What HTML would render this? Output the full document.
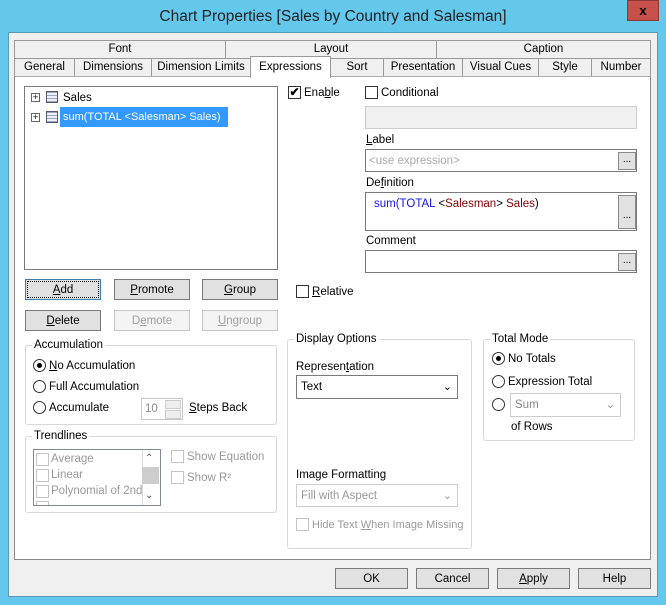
<!DOCTYPE html>
<html><head><style>
*{box-sizing:border-box;margin:0;padding:0}
body{width:666px;height:605px;position:relative;background:#63c8ec;font-family:"Liberation Sans",sans-serif;font-size:11.5px;line-height:16px;color:#000;overflow:hidden;white-space:nowrap}
.a{position:absolute}
.win{left:8px;top:32px;width:650px;height:565px;background:#f0f0f0;border:1px solid #5a9ab4}
.tab{position:absolute;height:18px;border:1px solid #9a9a9a;border-bottom:none;background:#f0f0f0;text-align:center;line-height:17px}
.panel{left:14px;top:76px;width:637px;height:484px;background:#fff;border:1px solid #8a8a8a;border-top-color:#adadad}
.btn{position:absolute;height:21px;border:1px solid #7a7a7a;background:#e1e1e1;text-align:center;line-height:20px}
.dis{color:#a0a0a0;border-color:#c8c8c8;background:#f4f4f4}
.cb{position:absolute;width:13px;height:13px;border:1px solid #333;background:#fff}
.cbd{border-color:#c4c4c4}
.rd{position:absolute;width:13px;height:13px;border:1px solid #333;border-radius:50%;background:#fff}
.grp{position:absolute;border:1px solid #d8d8d8;border-radius:3px}
.gl{position:absolute;top:-9px;left:6px;background:#fff;padding:0 2px}
.box{position:absolute;border:1px solid #7a7a7a;background:#fff}
.dots{position:absolute;width:18px;border:1px solid #8a8a8a;background:#e1e1e1;text-align:center;font-size:10px}
u{text-decoration:underline}
</style></head><body>
<div class="a" style="left:0;top:0;width:666px;height:32px;text-align:center;font-size:15.5px;line-height:33px;color:#222">Chart Properties [Sales by Country and Salesman]</div>
<div class="a" style="left:627px;top:0;width:32px;height:21px;background:#c7504a;border:1px solid #8b3a36;color:#000;text-align:center;font-weight:bold;font-size:13px;line-height:19px">x</div>
<div class="a win"></div>
<div class="tab" style="left:14px;top:40px;width:212px">Font</div>
<div class="tab" style="left:225px;top:40px;width:212px">Layout</div>
<div class="tab" style="left:436px;top:40px;width:215px">Caption</div>
<div class="tab" style="left:14px;top:58px;width:61px">General</div>
<div class="tab" style="left:74px;top:58px;width:78px">Dimensions</div>
<div class="tab" style="left:151px;top:58px;width:100px">Dimension Limits</div>
<div class="tab" style="left:330px;top:58px;width:54px">Sort</div>
<div class="tab" style="left:383px;top:58px;width:80px">Presentation</div>
<div class="tab" style="left:462px;top:58px;width:77px">Visual Cues</div>
<div class="tab" style="left:538px;top:58px;width:54px">Style</div>
<div class="tab" style="left:591px;top:58px;width:60px">Number</div>
<div class="a panel"></div>
<div class="tab" style="left:250px;top:56px;width:81px;height:22px;background:#fff;z-index:2;line-height:20px">Expressions</div>
<div class="box" style="left:24px;top:86px;width:254px;height:184px"></div>
<div class="a" style="left:31px;top:93px;width:9px;height:9px;border:1px solid #666;font-size:9px;line-height:7px;text-align:center">+</div>
<div class="a" style="left:46px;top:91px;width:12px;height:12px;border:1px solid #557;background:repeating-linear-gradient(#9ab 0 1px,#eef 1px 3px)"></div>
<div class="a" style="left:63px;top:90px">Sales</div>
<div class="a" style="left:31px;top:113px;width:9px;height:9px;border:1px solid #666;font-size:9px;line-height:7px;text-align:center">+</div>
<div class="a" style="left:46px;top:111px;width:12px;height:12px;border:1px solid #557;background:repeating-linear-gradient(#9ab 0 1px,#eef 1px 3px)"></div>
<div class="a" style="left:60px;top:107px;width:168px;height:20px;background:#3399ff;color:#fff;padding:2px 3px;font-size:11px">sum(TOTAL &lt;Salesman&gt; Sales)</div>
<div class="btn" style="left:25px;top:279px;width:76px;outline:1px dotted #000;outline-offset:-3px;border-color:#3c7fb1"><u>A</u>dd</div>
<div class="btn" style="left:114px;top:279px;width:76px"><u>P</u>romote</div>
<div class="btn" style="left:202px;top:279px;width:76px"><u>G</u>roup</div>
<div class="btn" style="left:25px;top:310px;width:76px"><u>D</u>elete</div>
<div class="btn dis" style="left:114px;top:310px;width:76px">D<u>e</u>mote</div>
<div class="btn dis" style="left:202px;top:310px;width:76px"><u>U</u>ngroup</div>
<div class="grp" style="left:25px;top:345px;width:252px;height:80px"><span class="gl">Accumulation</span></div>
<div class="rd" style="left:33px;top:359px"><div class="a" style="left:3px;top:3px;width:5px;height:5px;border-radius:50%;background:#000"></div></div>
<div class="a" style="left:49px;top:358px"><u>N</u>o Accumulation</div>
<div class="rd" style="left:33px;top:380px"></div>
<div class="a" style="left:49px;top:379px">Full Accumulation</div>
<div class="rd" style="left:33px;top:401px"></div>
<div class="a" style="left:49px;top:400px">Accumulate</div>
<div class="a" style="left:141px;top:398px;width:42px;height:22px;border:1px solid #c8c8c8;color:#888;padding:2px 3px">10</div>
<div class="a" style="left:165px;top:400px;width:16px;height:9px;border:1px solid #ccc;background:#eee"></div>
<div class="a" style="left:165px;top:410px;width:16px;height:9px;border:1px solid #ccc;background:#eee"></div>
<div class="a" style="left:189px;top:400px"><u>S</u>teps Back</div>
<div class="grp" style="left:25px;top:436px;width:252px;height:77px"><span class="gl">Trendlines</span></div>
<div class="a" style="left:33px;top:449px;width:128px;height:57px;border:1px solid #828790;overflow:hidden;color:#999">
<div class="cb cbd" style="left:2px;top:3px"></div><div class="a" style="left:17px;top:1px">Average</div>
<div class="cb cbd" style="left:2px;top:19px"></div><div class="a" style="left:17px;top:17px">Linear</div>
<div class="cb cbd" style="left:2px;top:35px"></div><div class="a" style="left:17px;top:33px">Polynomial of 2nd d</div>
<div class="cb cbd" style="left:2px;top:51px"></div>
<div class="a" style="left:108px;top:0;width:18px;height:55px;background:#fff;border-left:1px solid #ddd"></div>
<div class="a" style="left:108px;top:17px;width:17px;height:17px;background:#cdcdcd"></div>
<div class="a" style="left:111px;top:1px;font-size:10px;color:#555">&#8963;</div>
<div class="a" style="left:111px;top:38px;font-size:10px;color:#555">&#8964;</div>
</div>
<div class="cb cbd" style="left:171px;top:450px"></div><div class="a" style="left:187px;top:449px;color:#999">Show Equation</div>
<div class="cb cbd" style="left:171px;top:471px"></div><div class="a" style="left:187px;top:470px;color:#999">Show R²</div>
<div class="cb" style="left:288px;top:86px;font-size:12px;line-height:11px;text-align:center;font-weight:bold">✔</div>
<div class="a" style="left:304px;top:85px">Ena<u>b</u>le</div>
<div class="cb" style="left:365px;top:86px"></div>
<div class="a" style="left:381px;top:85px">Conditional</div>
<div class="a" style="left:365px;top:106px;width:272px;height:23px;border:1px solid #ccc;background:#f0f0f0"></div>
<div class="a" style="left:366px;top:132px"><u>L</u>abel</div>
<div class="box" style="left:365px;top:149px;width:272px;height:23px;color:#aaa;padding:3px 3px">&lt;use expression&gt;</div>
<div class="dots" style="left:618px;top:152px;height:18px;line-height:14px">...</div>
<div class="a" style="left:366px;top:175px">De<u>f</u>inition</div>
<div class="box" style="left:365px;top:192px;width:272px;height:39px;padding:3px 8px"><span style="color:#1515e6">sum(TOTAL</span> &lt;<span style="color:#800000">Salesman</span>&gt; <span style="color:#800000">Sales</span>)</div>
<div class="dots" style="left:618px;top:195px;height:34px;padding-top:12px">...</div>
<div class="a" style="left:366px;top:233px">Comment</div>
<div class="box" style="left:365px;top:250px;width:272px;height:23px"></div>
<div class="dots" style="left:618px;top:253px;height:18px;line-height:14px">...</div>
<div class="cb" style="left:296px;top:285px"></div>
<div class="a" style="left:312px;top:284px"><u>R</u>elative</div>
<div class="grp" style="left:287px;top:339px;width:185px;height:210px"><span class="gl">Display Options</span></div>
<div class="a" style="left:296px;top:359px">Represen<u>t</u>ation</div>
<div class="a" style="left:296px;top:375px;width:162px;height:24px;border:1px solid #7a7a7a;background:#fff;padding:3px 4px">Text<span class="a" style="right:5px;top:3px;font-size:11px">&#8964;</span></div>
<div class="a" style="left:296px;top:467px">Image Formatting</div>
<div class="a" style="left:296px;top:484px;width:162px;height:23px;border:1px solid #ccc;background:#fff;padding:3px 4px;color:#999">Fill with Aspect<span class="a" style="right:5px;top:3px;font-size:11px">&#8964;</span></div>
<div class="cb cbd" style="left:296px;top:518px"></div>
<div class="a" style="left:312px;top:517px;color:#999;font-size:11px">Hide Text <u>W</u>hen Image Missing</div>
<div class="grp" style="left:483px;top:339px;width:152px;height:102px"><span class="gl">Total Mode</span></div>
<div class="rd" style="left:492px;top:352px"><div class="a" style="left:3px;top:3px;width:5px;height:5px;border-radius:50%;background:#000"></div></div>
<div class="a" style="left:508px;top:351px">No Totals</div>
<div class="rd" style="left:492px;top:375px"></div>
<div class="a" style="left:508px;top:374px">Expression Total</div>
<div class="rd" style="left:492px;top:398px"></div>
<div class="a" style="left:510px;top:393px;width:111px;height:24px;border:1px solid #ccc;background:#fff;padding:3px 4px;color:#888">Sum<span class="a" style="right:5px;top:3px;font-size:11px">&#8964;</span></div>
<div class="a" style="left:511px;top:419px">of Rows</div>
<div class="btn" style="left:335px;top:568px;width:73px">OK</div>
<div class="btn" style="left:416px;top:568px;width:73px">Cancel</div>
<div class="btn" style="left:497px;top:568px;width:73px"><u>A</u>pply</div>
<div class="btn" style="left:578px;top:568px;width:73px">Help</div>
</body></html>
